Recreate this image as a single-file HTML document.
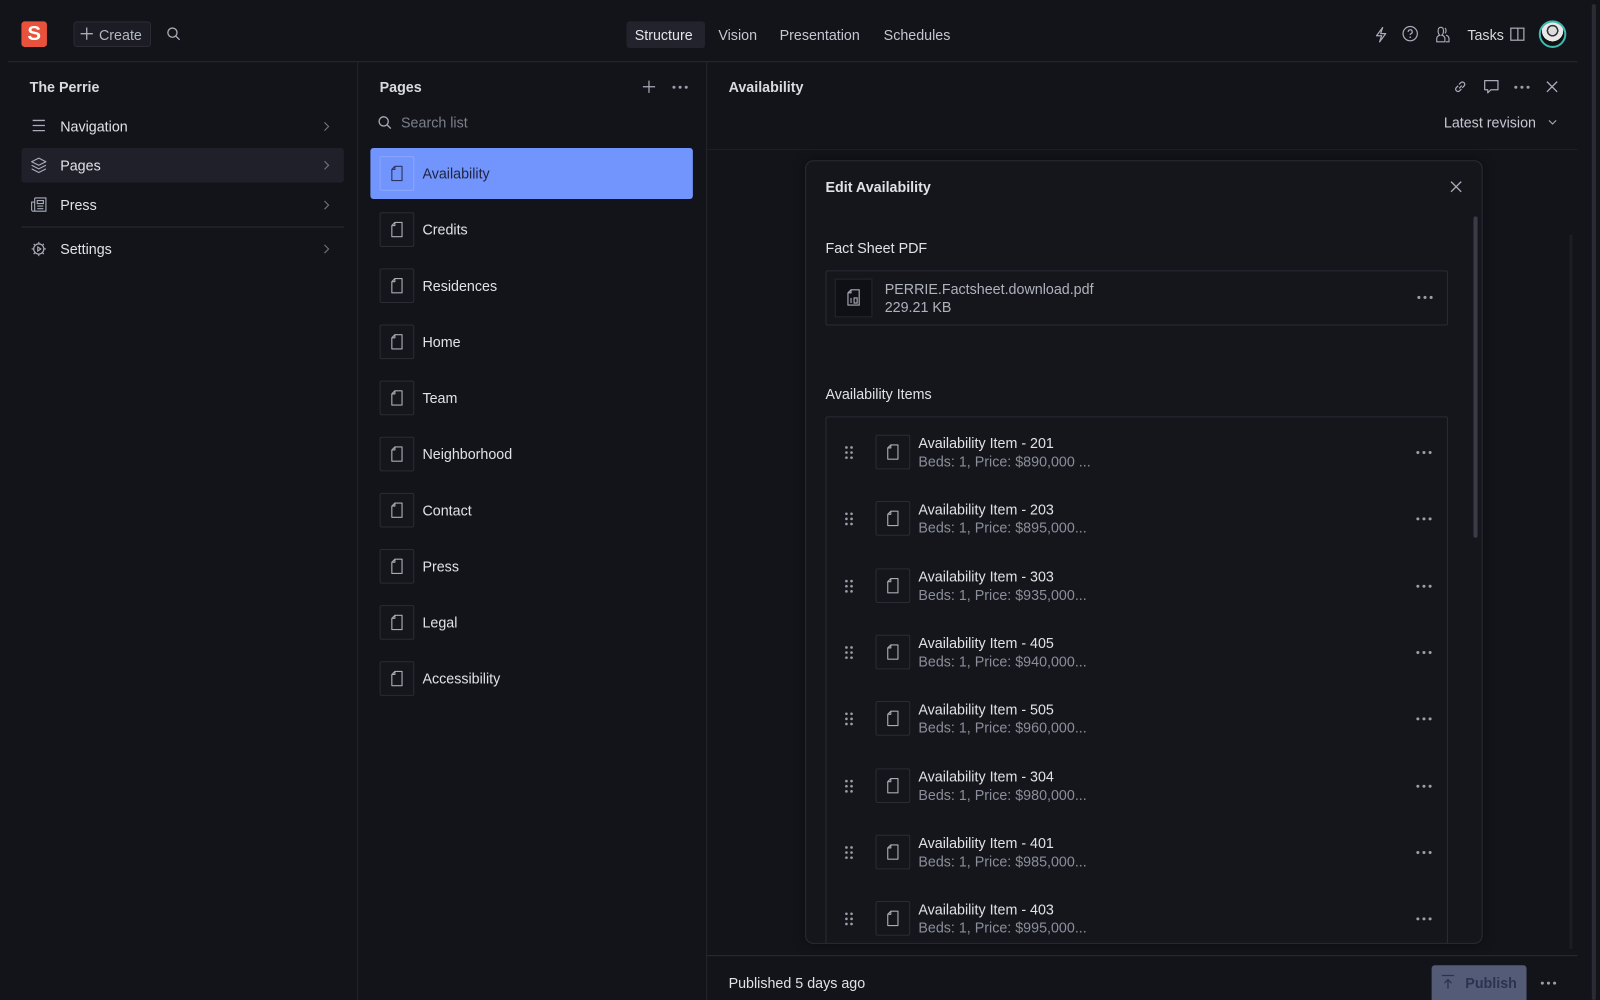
<!DOCTYPE html>
<html><head><meta charset="utf-8">
<style>
*{box-sizing:border-box;margin:0;padding:0}
html,body{width:1600px;height:1000px;overflow:hidden;background:#13141a;font-family:"Liberation Sans",sans-serif;color:#e4e6eb}
#w{position:absolute;left:0;top:0;width:1568px;height:980px;transform:scale(1.020408);transform-origin:0 0}
.a{position:absolute}
.t{position:absolute;font-size:14px;line-height:16px;white-space:nowrap}
.c{transform:translateY(-50%)}
svg{position:absolute;overflow:visible}
.ib{position:absolute;width:34px;height:34px;border:1px solid #2a2b35;border-radius:2px;background:#15161c}
.dots{position:absolute;width:16px;height:4px}
.dots i{position:absolute;top:0;width:3px;height:3px;border-radius:50%;background:#9a9eaa}
</style></head><body><div id="w">

<!-- top bar -->
<div class="a" style="left:21px;top:21px;width:25px;height:25px;background:#e8523d;border-radius:3px;color:#fff;font-weight:bold;font-size:20px;line-height:25px;text-align:center">S</div>
<div class="a" style="left:72px;top:21px;width:76px;height:25px;background:#1b1c24;border:1px solid #2a2b35;border-radius:3px"></div>
<svg style="left:78px;top:26px" width="14" height="14"><path d="M7 1v12M1 7h12" stroke="#a8acb8" stroke-width="1.3"/></svg>
<div class="t c" style="left:97px;top:34px;color:#b4b8c4">Create</div>
<svg style="left:163px;top:26px" width="14" height="14"><circle cx="6" cy="6" r="4.5" stroke="#a8acb8" stroke-width="1.3" fill="none"/><path d="M9.5 9.5l3.5 3.5" stroke="#a8acb8" stroke-width="1.3"/></svg>

<div class="a" style="left:614px;top:21px;width:77px;height:26px;background:#22232d;border-radius:3px"></div>
<div class="t c" style="left:622px;top:34px;color:#e4e6eb">Structure</div>
<div class="t c" style="left:704px;top:34px;color:#c4c7d0">Vision</div>
<div class="t c" style="left:764px;top:34px;color:#c4c7d0">Presentation</div>
<div class="t c" style="left:866px;top:34px;color:#c4c7d0">Schedules</div>

<svg style="left:1346px;top:26px" width="14" height="16"><path d="M9 1L3 9h5l-2 6 6-8H7z" stroke="#a8acb8" stroke-width="1.2" fill="none" stroke-linejoin="round"/></svg>
<svg style="left:1374px;top:25px" width="16" height="16"><circle cx="8" cy="8" r="7" stroke="#a8acb8" stroke-width="1.2" fill="none"/><path d="M6 6.2a2 2 0 1 1 2.6 1.9c-.5.2-.6.6-.6 1.2" stroke="#a8acb8" stroke-width="1.2" fill="none"/><circle cx="8" cy="11.5" r=".8" fill="#a8acb8"/></svg>
<svg style="left:1404px;top:24px" width="18" height="18"><path d="M4 17v-3c0-2 1.5-3 3-3.5C5.5 9 5 7.5 5.5 5 6 2 10 2 10.5 5c.5 2.5 0 4-1.5 5.5 1.5.5 3 1.5 3 3.5v3zM12 8.5c1.5-1 1.5-4 0-5M13 10.5c2 .5 3 1.5 3 3.5v3h-3" stroke="#a8acb8" stroke-width="1.1" fill="none"/></svg>
<div class="t c" style="left:1438px;top:34px;color:#d4d7de">Tasks</div>
<svg style="left:1480px;top:27px" width="14" height="13"><rect x=".6" y=".6" width="12.8" height="11.8" stroke="#a8acb8" stroke-width="1.2" fill="none"/><path d="M7.5 1v11" stroke="#a8acb8" stroke-width="1.2"/></svg>
<div class="a" style="left:1508px;top:20px;width:27px;height:27px;border-radius:50%;border:2px solid #3fb8b0;background:radial-gradient(circle at 50% 35%,#ddd 0 22%,#333 23% 30%,#e8e8e8 31% 55%,#111 56%)"></div>

<div class="a" style="left:8px;top:60px;width:1538px;height:1px;background:#292a34"></div>
<div class="a" style="left:1560px;top:4px;width:4px;height:976px;background:#2a2b35;border-radius:2px"></div>

<!-- left panel -->
<div class="a" style="left:350px;top:61px;width:1px;height:919px;background:#24252e"></div>
<div class="t c" style="left:29px;top:85px;font-weight:bold;color:#d8dae0">The Perrie</div>
<div class="a" style="left:21px;top:145px;width:316px;height:34px;background:#1f2029;border-radius:3px"></div>
<svg style="left:31px;top:117px" width="14" height="12"><path d="M1 1h12M1 6h12M1 11h12" stroke="#a8acb8" stroke-width="1.3"/></svg>
<svg style="left:30px;top:154px" width="16" height="16"><path d="M8 1l7 3.5-7 3.5-7-3.5zM1 8l7 3.5 7-3.5M1 11.5L8 15l7-3.5" stroke="#a8acb8" stroke-width="1.1" fill="none" stroke-linejoin="round"/></svg>
<svg style="left:30px;top:193px" width="16" height="15"><path d="M4 1h11v13H2.5A1.5 1.5 0 0 1 1 12.5V5h3M4 1v12.5M6.5 3.5h6v3h-6zM6.5 9h6M6.5 11.5h6" stroke="#a8acb8" stroke-width="1.1" fill="none"/></svg>
<svg style="left:30px;top:236px" width="16" height="16"><circle cx="8" cy="8" r="5" stroke="#a8acb8" stroke-width="1.2" fill="none"/><path d="M8 1v2M8 13v2M1 8h2M13 8h2M3 3l1.5 1.5M11.5 11.5L13 13M3 13l1.5-1.5M11.5 4.5L13 3M7 6l3 2-3 2z" stroke="#a8acb8" stroke-width="1.1" fill="none"/></svg>
<div class="t c" style="left:59px;top:124px;color:#e0e2e8">Navigation</div>
<div class="t c" style="left:59px;top:162px;color:#e0e2e8">Pages</div>
<div class="t c" style="left:59px;top:201px;color:#e0e2e8">Press</div>
<div class="t c" style="left:59px;top:244px;color:#e0e2e8">Settings</div>
<svg style="left:317px;top:119px" width="6" height="10"><path d="M1 1l4 4-4 4" stroke="#6f7380" stroke-width="1.1" fill="none"/></svg>
<svg style="left:317px;top:157px" width="6" height="10"><path d="M1 1l4 4-4 4" stroke="#6f7380" stroke-width="1.1" fill="none"/></svg>
<svg style="left:317px;top:196px" width="6" height="10"><path d="M1 1l4 4-4 4" stroke="#6f7380" stroke-width="1.1" fill="none"/></svg>
<svg style="left:317px;top:239px" width="6" height="10"><path d="M1 1l4 4-4 4" stroke="#6f7380" stroke-width="1.1" fill="none"/></svg>
<div class="a" style="left:21px;top:222px;width:316px;height:1px;background:#2a2b35"></div>

<!-- pages panel -->
<div class="a" style="left:692px;top:61px;width:1px;height:919px;background:#24252e"></div>
<div class="t c" style="left:372px;top:85px;font-weight:bold;color:#d8dae0">Pages</div>
<svg style="left:629px;top:78px" width="14" height="14"><path d="M7 1v12M1 7h12" stroke="#a8acb8" stroke-width="1.2"/></svg>
<div class="dots" style="left:659px;top:84px"><i style="left:0"></i><i style="left:6px"></i><i style="left:12px"></i></div>
<svg style="left:370px;top:113px" width="14" height="14"><circle cx="6" cy="6" r="4.5" stroke="#a8acb8" stroke-width="1.3" fill="none"/><path d="M9.5 9.5l3.5 3.5" stroke="#a8acb8" stroke-width="1.3"/></svg>
<div class="t c" style="left:393px;top:120px;color:#7b7f8c">Search list</div>
<div class="a" style="left:363px;top:145px;width:316px;height:50px;background:#7294fd;border-radius:3px"></div>

<div id="pages"></div>

<!-- doc pane -->
<div class="t c" style="left:714px;top:85px;font-weight:bold;color:#d8dae0">Availability</div>
<svg style="left:1424px;top:78px" width="14" height="14"><path d="M6 8.5l2.5-2.5M5 6L3 8a2.3 2.3 0 0 0 3.2 3.2l2-2M9 8l2-2A2.3 2.3 0 0 0 7.8 2.8l-2 2" stroke="#a8acb8" stroke-width="1.2" fill="none"/></svg>
<svg style="left:1454px;top:78px" width="15" height="15"><path d="M1 1h13v9H7l-3 3v-3H1z" stroke="#a8acb8" stroke-width="1.2" fill="none" stroke-linejoin="round"/></svg>
<div class="dots" style="left:1484px;top:84px"><i style="left:0"></i><i style="left:6px"></i><i style="left:12px"></i></div>
<svg style="left:1515px;top:79px" width="12" height="12"><path d="M1 1l10 10M11 1L1 11" stroke="#a8acb8" stroke-width="1.3"/></svg>
<div class="t c" style="left:1415px;top:120px;color:#c4c7d0">Latest revision</div>
<svg style="left:1517px;top:117px" width="9" height="6"><path d="M1 1l3.5 3.5L8 1" stroke="#a8acb8" stroke-width="1.1" fill="none"/></svg>
<div class="a" style="left:693px;top:146px;width:853px;height:1px;background:#1d1e26"></div>
<div class="a" style="left:1538px;top:230px;width:3px;height:700px;background:#1c1d25"></div>

<!-- modal -->
<div class="a" style="left:789px;top:157px;width:664px;height:768px;background:#15161c;border:1px solid #2a2b35;border-radius:8px;overflow:hidden;box-shadow:0 0 12px rgba(0,0,0,.4)">
 <div id="modal" class="a" style="left:-790px;top:-158px;width:1568px;height:1000px"></div>
</div>

<!-- bottom -->
<div class="a" style="left:693px;top:936px;width:853px;height:1px;background:#292a34"></div>
<div class="t c" style="left:714px;top:963px;color:#e0e2e8">Published 5 days ago</div>
<div class="a" style="left:1403px;top:946px;width:93px;height:34px;background:#545b77;border-radius:3px 3px 0 0"></div>
<svg style="left:1412px;top:955px" width="14" height="15"><path d="M1 1h12M7 14V5M3.5 8.5L7 5l3.5 3.5" stroke="#2c3250" stroke-width="1.3" fill="none"/></svg>
<div class="t c" style="left:1436px;top:963px;color:#2c3250;font-weight:bold">Publish</div>
<div class="dots" style="left:1510px;top:962px"><i style="left:0"></i><i style="left:6px"></i><i style="left:12px"></i></div>

</div>
<script>
(function(){
var doc='<path d="M4 1h7v14H1V4z M4 1v3H1" stroke="COL" stroke-width="1.1" fill="none" stroke-linejoin="round"/>';
function icon(x,y,col){return '<svg style="left:'+x+'px;top:'+y+'px" width="12" height="16">'+doc.replace(/COL/g,col)+'</svg>';}
var names=["Availability","Credits","Residences","Home","Team","Neighborhood","Contact","Press","Legal","Accessibility"];
var h='';
names.forEach(function(n,i){
 var cy=170+55*i, sel=i==0;
 h+='<div class="ib" style="left:372px;top:'+(cy-17)+'px;'+(sel?'background:#7294fd;border-color:#8aa6fd':'')+'"></div>';
 h+=icon(383,cy-8,sel?'#2c3460':'#a8acb8');
 h+='<div class="t c" style="left:414px;top:'+cy+'px;color:'+(sel?'#1e2440':'#e0e2e8')+'">'+n+'</div>';
});
document.getElementById('pages').outerHTML=h;
var m='';
m+='<div class="t c" style="left:809px;top:183px;font-weight:bold;color:#e0e2e8">Edit Availability</div>';
m+='<svg style="left:1421px;top:177px" width="12" height="12"><path d="M1 1l10 10M11 1L1 11" stroke="#a8acb8" stroke-width="1.3"/></svg>';
m+='<div class="a" style="left:1444px;top:212px;width:4px;height:315px;background:#3a3b46;border-radius:2px"></div>';
m+='<div class="t c" style="left:809px;top:243px;color:#e0e2e8">Fact Sheet PDF</div>';
m+='<div class="a" style="left:809px;top:265px;width:610px;height:54px;border:1px solid #2a2b35;border-radius:2px"></div>';
m+='<div class="a" style="left:818px;top:273px;width:37px;height:38px;background:#0f1015;border:1px solid #26272f"></div>';
m+='<svg style="left:830px;top:283px" width="14" height="17"><path d="M4 1h8v15H1V4z M4 1v3H1 M4 9v5M7 9h3v5H7z" stroke="#a8acb8" stroke-width="1.1" fill="none"/></svg>';
m+='<div class="t c" style="left:867px;top:283px;color:#aeb2bd">PERRIE.Factsheet.download.pdf</div>';
m+='<div class="t c" style="left:867px;top:301px;color:#aeb2bd">229.21 KB</div>';
m+='<div class="dots" style="left:1389px;top:290px"><i style="left:0"></i><i style="left:6px"></i><i style="left:12px"></i></div>';
m+='<div class="t c" style="left:809px;top:386px;color:#e0e2e8">Availability Items</div>';
m+='<div class="a" style="left:809px;top:408px;width:610px;height:600px;border:1px solid #2a2b35;border-radius:2px"></div>';
var items=[["201","$890,000 ..."],["203","$895,000..."],["303","$935,000..."],["405","$940,000..."],["505","$960,000..."],["304","$980,000..."],["401","$985,000..."],["403","$995,000..."]];
items.forEach(function(it,i){
 var cy=Math.round(443+65.3*i);
 m+='<svg style="left:828px;top:'+(cy-6)+'px" width="8" height="13">';
 [0,5,10].forEach(function(y){m+='<circle cx="1.5" cy="'+(y+1.5)+'" r="1.3" fill="#9a9eaa"/><circle cx="6.5" cy="'+(y+1.5)+'" r="1.3" fill="#9a9eaa"/>';});
 m+='</svg>';
 m+='<div class="ib" style="left:858px;top:'+(cy-17)+'px"></div>';
 m+=icon(869,cy-8,'#a8acb8');
 m+='<div class="t c" style="left:900px;top:'+(cy-9)+'px;color:#e0e2e8">Availability Item - '+it[0]+'</div>';
 m+='<div class="t c" style="left:900px;top:'+(cy+9)+'px;color:#8a8e9a">Beds: 1, Price: '+it[1]+'</div>';
 m+='<div class="dots" style="left:1388px;top:'+(cy-1)+'px"><i style="left:0"></i><i style="left:6px"></i><i style="left:12px"></i></div>';
});
document.getElementById('modal').innerHTML=m;
})();
</script>
</body></html>
